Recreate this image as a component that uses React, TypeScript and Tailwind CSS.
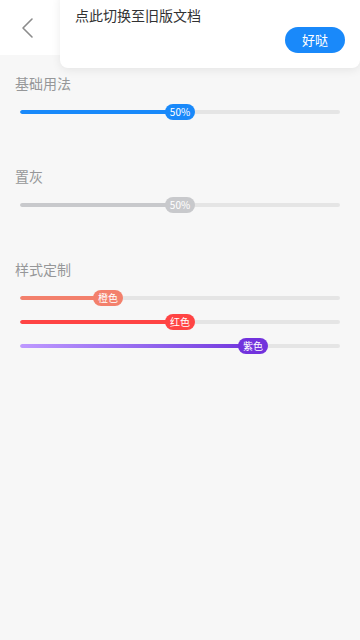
import React from "react";

function Slider({
  pos,
  fill,
  thumb,
  label,
}: {
  pos: number;
  fill: string;
  thumb: string;
  label: string;
}) {
  return (
    <div className="relative h-[16px] mx-[20px] flex items-center">
      <div className="w-full h-[4px] rounded-full bg-[#e5e5e5] overflow-hidden">
        <div className={`h-full rounded-full ${fill}`} style={{ width: `${pos}px` }} />
      </div>
      <div
        className={`absolute top-0 h-[16px] w-[30px] -ml-[15px] rounded-full flex items-center justify-center text-[10px] leading-none text-white ${thumb}`}
        style={{ left: `${pos}px` }}
      >
        {label}
      </div>
    </div>
  );
}

export default function App() {
  return (
    <div
      className="relative w-[360px] h-[640px] bg-[#f7f7f7] overflow-hidden"
      style={{ fontFamily: '"Noto Sans CJK SC", Roboto, "Noto Sans", sans-serif' }}
    >
      <div className="h-[55px] bg-white flex items-center pl-[20px]">
        <svg width="16" height="22" viewBox="0 0 16 22" fill="none">
          <path d="M12 2 L3 11 L12 20" stroke="#8c8c8c" strokeWidth="1.6" strokeLinecap="round" strokeLinejoin="round" />
        </svg>
      </div>

      <div className="absolute left-[60px] top-[-8px] w-[300px] h-[76px] bg-white rounded-[8px] shadow-[0_2px_10px_rgba(0,0,0,0.08)] pt-[8px] px-[15px]">
        <div className="text-[14px] leading-[16px] text-[#323233] mt-[7px]">点此切换至旧版文档</div>
        <div className="flex justify-end mt-[4px] pr-0">
          <div className="w-[60px] h-[26px] rounded-full bg-[#1989fa] text-white text-[13px] flex items-center justify-center">
            好哒
          </div>
        </div>
      </div>

      <div className="pt-[18px]">
        <div className="px-[15px] h-[20px] leading-[20px] text-[14px] text-[#969799]">基础用法</div>
        <div className="mt-[11px]">
          <Slider pos={160} fill="bg-[#1989fa]" thumb="bg-[#1989fa]" label="50%" />
        </div>

        <div className="mt-[46px] px-[15px] h-[20px] leading-[20px] text-[14px] text-[#969799]">置灰</div>
        <div className="mt-[11px]">
          <Slider pos={160} fill="bg-[#c8c9cc]" thumb="bg-[#c8c9cc]" label="50%" />
        </div>

        <div className="mt-[46px] px-[15px] h-[20px] leading-[20px] text-[14px] text-[#969799]">样式定制</div>
        <div className="mt-[11px] flex flex-col gap-[8px]">
          <Slider pos={88} fill="bg-[#f3806c]" thumb="bg-[#f3806c]" label="橙色" />
          <Slider pos={160} fill="bg-[#ff4444]" thumb="bg-[#ff4444]" label="红色" />
          <Slider
            pos={233}
            fill="bg-gradient-to-r from-[#be99ff] to-[#7232dd]"
            thumb="bg-[#7232dd]"
            label="紫色"
          />
        </div>
      </div>
    </div>
  );
}
